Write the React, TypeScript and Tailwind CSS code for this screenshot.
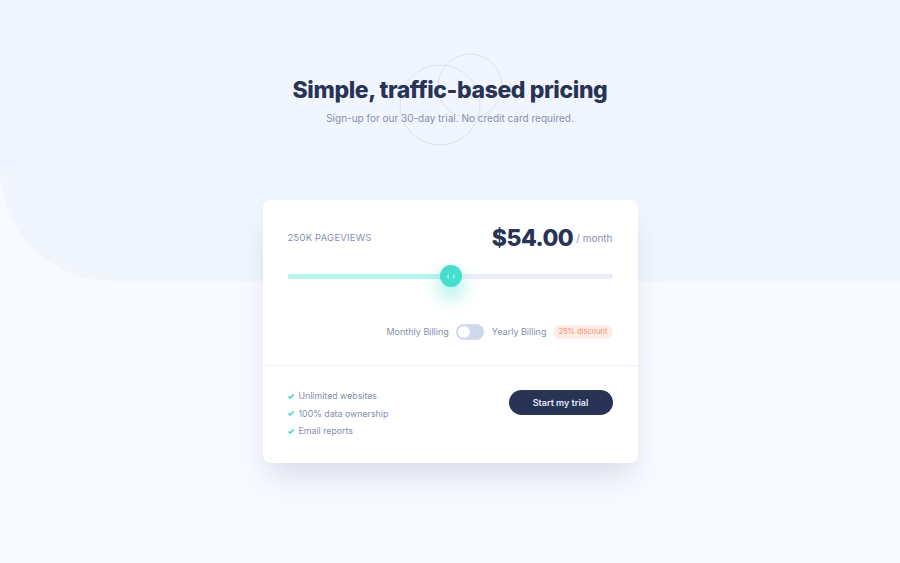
import React from "react";

const font = { fontFamily: "Inter, 'Noto Sans', sans-serif" };

function Check() {
  return (
    <svg width="6" height="5" viewBox="0 0 9 8" className="shrink-0">
      <path d="M1 4.5 L3.3 6.6 L8 1.2" fill="none" stroke="#10d8c4" strokeWidth="2" strokeLinecap="round" strokeLinejoin="round" />
    </svg>
  );
}

export default function App() {
  return (
    <div className="relative min-h-[563px] w-full overflow-hidden bg-[#f9faff]" style={font}>
      {/* background shape */}
      <div className="absolute left-0 top-0 h-[281px] w-full rounded-bl-[112px] bg-[#f1f5fe]" />
      {/* circles pattern */}
      <svg className="absolute left-0 top-0" width="900" height="200">
        <circle cx="440" cy="105" r="40" fill="none" stroke="#dde2ef" strokeWidth="1" />
        <circle cx="470" cy="86" r="32" fill="none" stroke="#dde2ef" strokeWidth="1" />
      </svg>

      <div className="relative flex flex-col items-center">
        <h1 className="mt-[75px] text-[23px] font-extrabold leading-[30px] tracking-[-0.4px] text-[#293356]">
          Simple, traffic-based pricing
        </h1>
        <p className="mt-[5px] text-[10px] leading-[16px] text-[#858fad]">
          Sign-up for our 30-day trial. No credit card required.
        </p>

        <div className="mt-[74px] w-[375px] rounded-[8px] bg-white shadow-[0_18px_28px_-6px_rgba(120,130,170,0.25)]">
          <div className="px-[25px] pt-[23px] pb-[25px]">
            <div className="flex h-[30px] items-center justify-between">
              <span className="text-[9.5px] tracking-[0.2px] text-[#858fad]">250K PAGEVIEWS</span>
              <div className="flex items-center gap-[3px]">
                <span className="text-[23px] font-extrabold leading-[30px] tracking-[-0.5px] text-[#293356]">$54.00</span>
                <span className="text-[10px] text-[#858fad]">/ month</span>
              </div>
            </div>

            <div className="relative mt-[12px] h-[22px]">
              <div className="absolute left-0 top-[8.5px] h-[5px] w-full rounded-full bg-[#eaeefb]" />
              <div className="absolute left-0 top-[8.5px] h-[5px] w-[163px] rounded-full bg-[#b5f5ee]" />
              <div className="absolute left-[152px] top-0 flex h-[22px] w-[22px] items-center justify-center rounded-full bg-[#45ddcb] shadow-[0_10px_16px_3px_rgba(16,213,194,0.28)]">
                <svg width="10" height="7" viewBox="0 0 10 7">
                  <path d="M3 0.5 L0.5 3.5 L3 6.5 Z" fill="#8ff5ea" />
                  <path d="M7 0.5 L9.5 3.5 L7 6.5 Z" fill="#8ff5ea" />
                </svg>
              </div>
            </div>

            <div className="mt-[37px] flex h-[16px] items-center justify-end text-[9px] text-[#858fad]">
              <span>Monthly Billing</span>
              <div className="ml-[7px] flex h-[16px] w-[28px] items-center rounded-full bg-[#cfd8ef] px-[2px]">
                <div className="h-[12px] w-[12px] rounded-full bg-white" />
              </div>
              <span className="ml-[8px]">Yearly Billing</span>
              <span className="ml-[7px] rounded-full bg-[#feede8] px-[5px] py-[1px] text-[7.5px] text-[#ff8d68]">25% discount</span>
            </div>
          </div>

          <div className="h-px w-full bg-[#ecf0fb]" />

          <div className="flex items-start justify-between px-[25px] pt-[24px] pb-[26px]">
            <ul className="flex flex-col gap-[5.5px] text-[8.8px] leading-[12px] text-[#858fad]">
              <li className="flex items-center gap-[5px]"><Check />Unlimited websites</li>
              <li className="flex items-center gap-[5px]"><Check />100% data ownership</li>
              <li className="flex items-center gap-[5px]"><Check />Email reports</li>
            </ul>
            <button className="h-[25px] w-[104px] rounded-full bg-[#293356] text-[9px] font-semibold text-[#e3e8ff]">
              Start my trial
            </button>
          </div>
        </div>
      </div>
    </div>
  );
}
